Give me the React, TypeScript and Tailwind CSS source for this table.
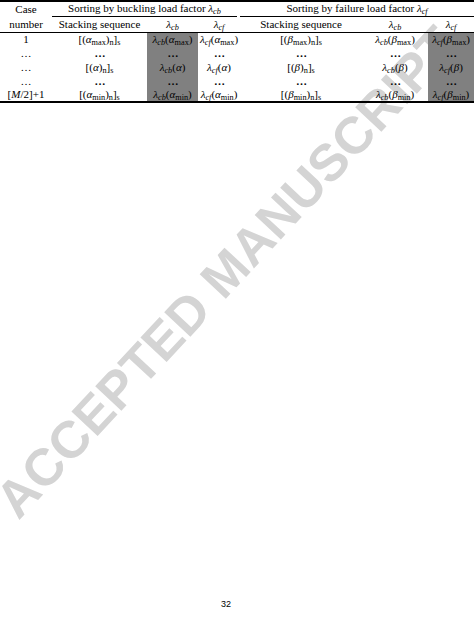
import React from 'react';

function Lam({ sub }: { sub: string }) {
  return (
    <>
      <i>λ</i>
      <sub className="italic">{sub}</sub>
    </>
  );
}

function Seq({ g, s }: { g: string; s?: string }) {
  return (
    <>
      [(<i>{g}</i>
      {s && <sub>{s}</sub>})<sub>n</sub>]<sub>s</sub>
    </>
  );
}

function Fn({ sub, g, s }: { sub: string; g: string; s?: string }) {
  return (
    <>
      <Lam sub={sub} />(<i>{g}</i>
      {s && <sub>{s}</sub>})
    </>
  );
}

const Dots = () => <span className="font-bold tracking-[-1px]">…</span>;

type Row = {
  c: React.ReactNode;
  cells: React.ReactNode[];
};

const rows: Row[] = [
  {
    c: '1',
    cells: [
      <Seq g="α" s="max" />,
      <Fn sub="cb" g="α" s="max" />,
      <Fn sub="cf" g="α" s="max" />,
      <Seq g="β" s="max" />,
      <Fn sub="cb" g="β" s="max" />,
      <Fn sub="cf" g="β" s="max" />,
    ],
  },
  { c: '…', cells: [<Dots />, <Dots />, <Dots />, <Dots />, <Dots />, <Dots />] },
  {
    c: '…',
    cells: [
      <Seq g="α" />,
      <Fn sub="cb" g="α" />,
      <Fn sub="cf" g="α" />,
      <Seq g="β" />,
      <Fn sub="cb" g="β" />,
      <Fn sub="cf" g="β" />,
    ],
  },
  { c: '…', cells: [<Dots />, <Dots />, <Dots />, <Dots />, <Dots />, <Dots />] },
  {
    c: (
      <>
        [<i>M</i>/2]+1
      </>
    ),
    cells: [
      <Seq g="α" s="min" />,
      <Fn sub="cb" g="α" s="min" />,
      <Fn sub="cf" g="α" s="min" />,
      <Seq g="β" s="min" />,
      <Fn sub="cb" g="β" s="min" />,
      <Fn sub="cf" g="β" s="min" />,
    ],
  },
];

export default function App() {
  return (
    <div className="relative w-[474px] h-[617px] bg-white overflow-hidden flex flex-col">
      {/* watermark */}
      <div className="absolute left-[226px] top-[272px] -translate-x-1/2 -translate-y-1/2 -rotate-[47deg] whitespace-nowrap font-['Liberation_Sans',Arial,sans-serif] font-bold text-[52px] leading-none text-[#d4d4d4] pointer-events-none">
        ACCEPTED MANUSCRIPT
      </div>

      <table className="relative w-[474px] table-fixed border-collapse text-[11px] leading-[13px] text-black text-center font-['Liberation_Serif',serif]">
        <colgroup>
          <col className="w-[52px]" />
          <col className="w-[95px]" />
          <col className="w-[51px]" />
          <col className="w-[42px]" />
          <col className="w-[122px]" />
          <col className="w-[66px]" />
          <col className="w-[46px]" />
        </colgroup>
        <thead>
          <tr className="border-t-[2px] border-black h-[15px]">
            <td className="p-0">Case</td>
            <td colSpan={3} className="p-0 align-bottom">
              <div className="mr-[3px] border-b border-black pb-[1px]">
                Sorting by buckling load factor <Lam sub="cb" />
              </div>
            </td>
            <td colSpan={3} className="p-0 align-bottom">
              <div className="border-b border-black pb-[1px]">
                Sorting by failure load factor <Lam sub="cf" />
              </div>
            </td>
          </tr>
          <tr className="border-b border-black h-[15px]">
            <td className="p-0">number</td>
            <td className="p-0">Stacking sequence</td>
            <td className="p-0">
              <Lam sub="cb" />
            </td>
            <td className="p-0">
              <Lam sub="cf" />
            </td>
            <td className="p-0">Stacking sequence</td>
            <td className="p-0">
              <Lam sub="cb" />
            </td>
            <td className="p-0">
              <Lam sub="cf" />
            </td>
          </tr>
        </thead>
        <tbody className="border-b-[2px] border-black">
          {rows.map((r, i) => (
            <tr key={i} className="h-[14px]">
              <td className="p-0">{r.c}</td>
              {r.cells.map((cell, j) => (
                <td key={j} className={j === 1 || j === 5 ? 'p-0 bg-[#808080]' : 'p-0'}>
                  {cell}
                </td>
              ))}
            </tr>
          ))}
        </tbody>
      </table>

      <div className="flex-1" />
      <div className="flex justify-center pr-[22px] pb-[8px] font-['Liberation_Sans',Arial,sans-serif] text-[9px] leading-none text-black">
        32
      </div>
    </div>
  );
}
